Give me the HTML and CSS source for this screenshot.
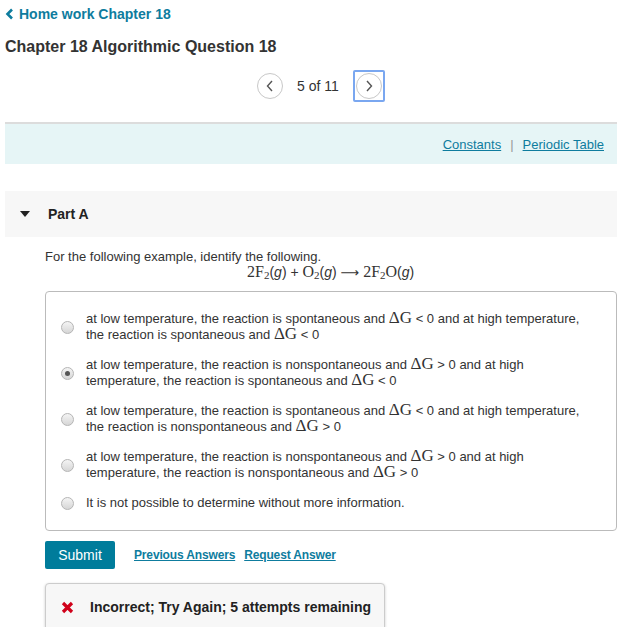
FILE: index.html
```html
<!DOCTYPE html>
<html>
<head>
<meta charset="utf-8">
<link rel="stylesheet" href="styles.css">
</head>
<body>
<div class="page">
  <a class="back" href="#"><svg class="back-ico" width="9" height="12" viewBox="0 0 9 12"><path d="M7 1.5 L2.5 6 L7 10.5" fill="none" stroke="#0e7c9e" stroke-width="2.6"/></svg>Home work Chapter 18</a>
  <h1 class="title">Chapter 18 Algorithmic Question 18</h1>
  <div class="pager">
    <span class="circ"><svg width="10" height="14" viewBox="0 0 10 14"><path d="M7 2 L2.5 7 L7 12" fill="none" stroke="#555" stroke-width="1.4"/></svg></span>
    <span class="count">5 of 11</span>
    <span class="focus"><span class="circ"><svg width="10" height="14" viewBox="0 0 10 14"><path d="M3 2 L7.5 7 L3 12" fill="none" stroke="#555" stroke-width="1.4"/></svg></span></span>
  </div>
  <div class="resources">
    <a href="#">Constants</a><span class="sep">|</span><a href="#">Periodic Table</a>
  </div>
  <div class="part">
    <span class="tri"></span><span class="part-name">Part A</span>
  </div>
  <div class="body">
    <p class="prompt">For the following example, identify the following.</p>
    <div class="eq"><span class="m">2F<sub>2</sub></span><span class="ph">(<i>g</i>)</span> + <span class="m">O<sub>2</sub></span><span class="ph">(<i>g</i>)</span> <span class="arrow">⟶</span> <span class="m">2F<sub>2</sub>O</span><span class="ph">(<i>g</i>)</span></div>
    <div class="answers">
      <div class="opt"><span class="radio"></span><span class="txt">at low temperature, the reaction is spontaneous and <span class="dg">ΔG</span> &lt; 0 and at high temperature, the reaction is spontaneous and <span class="dg">ΔG</span> &lt; 0</span></div>
      <div class="opt"><span class="radio on"></span><span class="txt">at low temperature, the reaction is nonspontaneous and <span class="dg">ΔG</span> &gt; 0 and at high temperature, the reaction is spontaneous and <span class="dg">ΔG</span> &lt; 0</span></div>
      <div class="opt"><span class="radio"></span><span class="txt">at low temperature, the reaction is spontaneous and <span class="dg">ΔG</span> &lt; 0 and at high temperature, the reaction is nonspontaneous and <span class="dg">ΔG</span> &gt; 0</span></div>
      <div class="opt"><span class="radio"></span><span class="txt">at low temperature, the reaction is nonspontaneous and <span class="dg">ΔG</span> &gt; 0 and at high temperature, the reaction is nonspontaneous and <span class="dg">ΔG</span> &gt; 0</span></div>
      <div class="opt single"><span class="radio"></span><span class="txt">It is not possible to determine without more information.</span></div>
    </div>
    <div class="actions">
      <button class="submit">Submit</button>
      <a href="#" class="act">Previous Answers</a>
      <a href="#" class="act">Request Answer</a>
    </div>
    <div class="feedback">
      <svg class="x" width="13" height="13" viewBox="0 0 13 13"><path d="M2 2 L11 11 M11 2 L2 11" stroke="#d0021b" stroke-width="3.2" stroke-linecap="butt"/></svg>
      <span>Incorrect; Try Again; 5 attempts remaining</span>
    </div>
  </div>
</div>
</body>
</html>
```
FILE: styles.css
```css
* { box-sizing: border-box; }
body {
  margin: 0;
  font-family: "Liberation Sans", Arial, sans-serif;
  color: #333;
  background: #fff;
}
.page {
  width: 617px;
  padding: 0 0 0 5px;
}
.back {
  display: flex;
  align-items: center;
  gap: 5px;
  height: 28px;
  font-weight: bold;
  font-size: 14px;
  color: #0e7c9e;
  text-decoration: none;
}
.title {
  margin: 7px 0 0;
  height: 24px;
  line-height: 24px;
  font-size: 16px;
  font-weight: bold;
  color: #333;
}
.pager {
  display: flex;
  align-items: center;
  justify-content: center;
  gap: 14px;
  padding-left: 20px;
  margin-top: 12px;
  height: 30px;
}
.circ {
  width: 26px;
  height: 26px;
  border: 1px solid #c8c8c8;
  border-radius: 50%;
  display: flex;
  align-items: center;
  justify-content: center;
  background: #fff;
}
.focus {
  padding: 1px;
  border: 2px solid #7aa7f0;
  border-radius: 2px;
  display: flex;
}
.count { font-size: 14px; color: #333; }
.resources {
  margin-top: 21px;
  height: 42px;
  background: #e6f5f6;
  border-top: 2px solid #dcdcdc;
  display: flex;
  align-items: center;
  justify-content: flex-end;
  padding-right: 13px;
  font-size: 13px;
}
.resources a { color: #0e7c9e; text-decoration: underline; }
.sep { color: #999; margin: 0 9px; }
.part {
  margin-top: 27px;
  height: 46px;
  background: #f7f7f7;
  display: flex;
  align-items: center;
  padding-left: 15px;
}
.tri {
  width: 0; height: 0;
  border-left: 5px solid transparent;
  border-right: 5px solid transparent;
  border-top: 6px solid #222;
  margin-right: 18px;
}
.part-name { font-weight: bold; font-size: 14px; color: #222; }
.body { padding-left: 40px; }
.prompt {
  margin: 12px 0 0;
  font-size: 13px;
  line-height: 15px;
}
.eq {
  text-align: left;
  padding-left: 202px;
  font-size: 14px;
  line-height: 16px;
  height: 27px;
}
.m { font-family: "Liberation Serif", serif; font-size: 16px; }
.m sub { font-size: 11px; vertical-align: -2px; line-height: 0; }
.ph i { font-style: italic; }
.ph { font-size: 14px; }
.arrow { font-family: "DejaVu Sans", sans-serif; font-size: 13px; }
.answers {
  border: 1px solid #bbb;
  border-radius: 4px;
  padding: 19px 0 19px 0;
}
.opt {
  display: flex;
  align-items: center;
  padding-left: 15px;
  padding-right: 20px;
  min-height: 32px;
  margin-bottom: 14px;
}
.opt.single { min-height: 16px; margin-bottom: 0; }
.radio {
  flex: none;
  width: 13px;
  height: 13px;
  border-radius: 50%;
  border: 1px solid #b5b5b5;
  background: linear-gradient(#f4f4f4, #d6d6d6);
  margin-right: 12px;
  position: relative;
}
.radio.on::after {
  content: "";
  position: absolute;
  left: 3px; top: 3px;
  width: 5px; height: 5px;
  border-radius: 50%;
  background: #555;
}
.txt { font-size: 13px; line-height: 16px; }
.dg { font-family: "Liberation Serif", serif; font-size: 17px; line-height: 14px; }
.actions {
  margin-top: 10px;
  display: flex;
  align-items: center;
  gap: 9px;
}
.submit {
  width: 70px;
  height: 28px;
  background: #007c9b;
  color: #fff;
  border: none;
  border-radius: 2px;
  font-family: "Liberation Sans", Arial, sans-serif;
  font-size: 14px;
  margin-right: 10px;
}
.act {
  font-size: 12px;
  font-weight: bold;
  color: #0e7c9e;
  text-decoration: underline;
  letter-spacing: -0.15px;
}
.feedback {
  margin-top: 14px;
  width: 340px;
  height: 48px;
  background: #f7f7f7;
  border: 1px solid #ccc;
  border-radius: 4px;
  box-shadow: 0 1px 3px rgba(0,0,0,0.2);
  display: flex;
  align-items: center;
  padding-left: 15px;
  gap: 16px;
  font-weight: bold;
  font-size: 14px;
  color: #222;
}
```
